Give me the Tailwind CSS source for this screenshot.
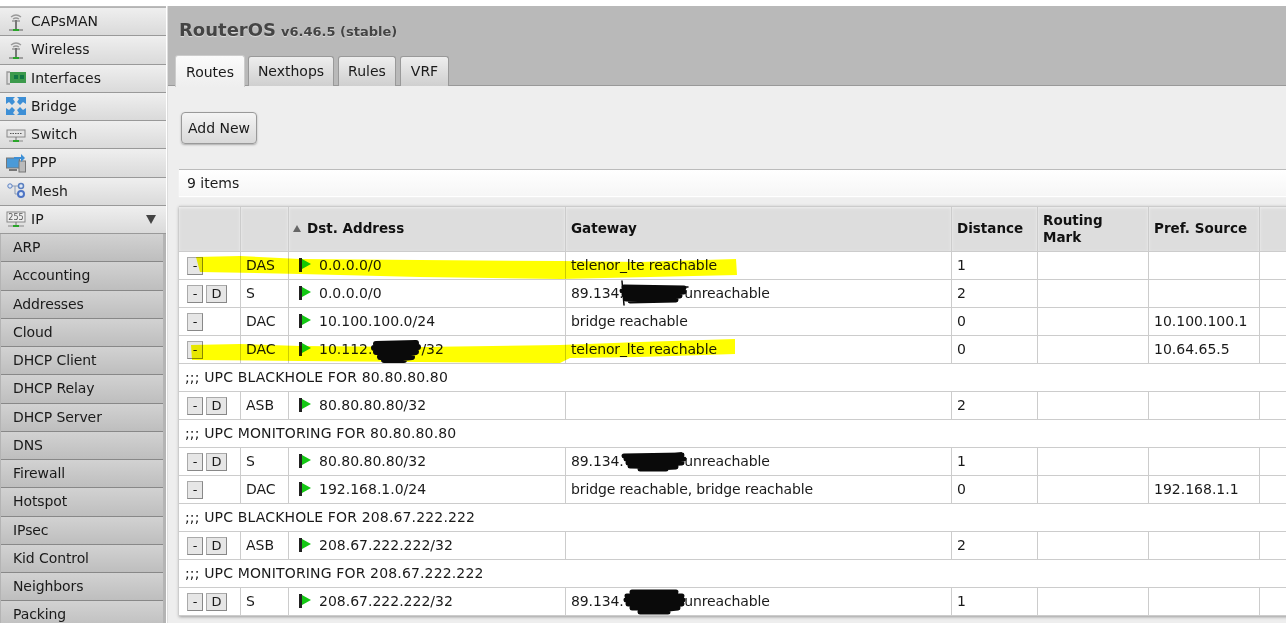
<!DOCTYPE html>
<html lang="en">
<head>
  <meta charset="UTF-8" />
  <title>RouterOS - Routes</title>
  <script src="https://cdn.jsdelivr.net/npm/@tailwindcss/browser@4"></script>
</head>
<body class="bg-white">
  <div class="relative h-[623px] w-[1286px] overflow-hidden bg-white pt-[6px] font-['DejaVu_Sans',sans-serif] text-[14px] text-[#1a1a1a]">
    <div class="flex h-[617px]">

      <!-- menu -->
      <nav id="menu" class="h-full w-[166px] shrink-0 overflow-hidden border-t border-[#bbb] bg-[#b4b4b4] pt-px"></nav>

      <main class="ml-px flex h-full min-w-0 flex-1 flex-col border-l border-[#ddd] bg-[#eeeeee]">
        <header class="h-[80px] shrink-0 border-b border-[#999] bg-[#b9b9b9]">
          <div class="flex h-[48px] items-baseline pl-[11px] pt-[10px] font-bold text-[#444] [text-shadow:0_1px_1px_#ddd]">
            <span class="text-[18px]">RouterOS</span>
            <span class="ml-[5px] text-[13px]">v6.46.5 (stable)</span>
          </div>
          <div class="flex h-[32px] items-end gap-[3px] pl-[7px] text-[14px]">
            <div class="mb-[-1px] flex h-[32px] w-[70px] items-center justify-center rounded-t-[3px] border border-b-0 border-[#ccc] bg-gradient-to-b from-[#fbfbfb] to-[#eeeeee] pt-[2px]">Routes</div>
            <div class="flex h-[30px] w-[86px] items-center justify-center rounded-t-[3px] border border-b-0 border-[#999] bg-gradient-to-b from-[#eee] to-[#cfcfcf]">Nexthops</div>
            <div class="ml-px flex h-[30px] w-[58px] items-center justify-center rounded-t-[3px] border border-b-0 border-[#999] bg-gradient-to-b from-[#eee] to-[#cfcfcf]">Rules</div>
            <div class="ml-px flex h-[30px] w-[49px] items-center justify-center rounded-t-[3px] border border-b-0 border-[#999] bg-gradient-to-b from-[#eee] to-[#cfcfcf]">VRF</div>
          </div>
        </header>

        <div class="pl-[11px]">
          <button class="mt-[26px] ml-[2px] block h-[32px] w-[76px] rounded-[4px] border border-[#999] bg-gradient-to-b from-[#f4f4f4] to-[#d9d9d9] text-[14px] shadow-[0_1px_2px_#aaa]">Add New</button>
          <div class="mt-[25px] flex h-[27px] items-center border-t border-[#bbb] bg-gradient-to-b from-[#ffffff] to-[#f6f6f6] pl-[8px] text-[14px] shadow-[0_1px_1px_#fff]">9 items</div>

          <table class="mt-[10px] w-[1141px] table-fixed border-separate border-spacing-0 bg-white shadow-[0_1px_3px_#999]">
            <colgroup>
              <col class="w-[62px]" /><col class="w-[48px]" /><col class="w-[277px]" /><col class="w-[386px]" />
              <col class="w-[86px]" /><col class="w-[111px]" /><col class="w-[111px]" /><col class="w-[60px]" />
            </colgroup>
            <thead>
              <tr class="h-[46px] text-left text-[13.5px] font-bold leading-[17px] text-[#111]">
                <th class="border-y border-r border-[#ccc] bg-[#dddddd] shadow-[inset_0_1px_3px_#f0f0f0]"></th>
                <th class="border-y border-r border-[#ccc] bg-[#dddddd] shadow-[inset_0_1px_3px_#f0f0f0]"></th>
                <th class="border-y border-r border-[#ccc] bg-[#dddddd] pb-[2px] pl-[4px] shadow-[inset_0_1px_3px_#f0f0f0]"><span class="mr-[6px] inline-block h-0 w-0 border-x-[4px] border-b-[7px] border-x-transparent border-b-[#666] align-[1px]"></span>Dst. Address</th>
                <th class="border-y border-r border-[#ccc] bg-[#dddddd] pb-[2px] pl-[5px] shadow-[inset_0_1px_3px_#f0f0f0]">Gateway</th>
                <th class="border-y border-r border-[#ccc] bg-[#dddddd] pb-[2px] pl-[5px] shadow-[inset_0_1px_3px_#f0f0f0]">Distance</th>
                <th class="border-y border-r border-[#ccc] bg-[#dddddd] pl-[5px] shadow-[inset_0_1px_3px_#f0f0f0]">Routing<br />Mark</th>
                <th class="border-y border-r border-[#ccc] bg-[#dddddd] pb-[2px] pl-[5px] shadow-[inset_0_1px_3px_#f0f0f0]">Pref. Source</th>
                <th class="border-y border-[#ccc] bg-[#dddddd] shadow-[inset_0_1px_3px_#f0f0f0]"></th>
              </tr>
            </thead>
            <tbody id="routes"></tbody>
          </table>
        </div>
      </main>
    </div>

    <!-- marker and pen scribbles drawn over the screenshot -->
    <svg class="pointer-events-none absolute left-0 top-0 mix-blend-multiply" width="1286" height="623" viewBox="0 0 1286 623">
      <path fill="#ffff00" d="M196 257 L240 256 L300 259 L420 260 L560 261 L640 262 L736 259 L737 275 L650 277 L560 279 L420 277 L300 274 L200 272 Z" />
      <path fill="#ffff00" d="M191 345 L240 344 L300 346 L420 347 L560 345 L640 342 L735 339 L735 354 L640 357 L570 358 L560 363 L420 362 L300 361 L192 360 Z" />
    </svg>
    <svg class="pointer-events-none absolute left-0 top-0" width="1286" height="623" viewBox="0 0 1286 623" fill="none" stroke="#0a0a0a" stroke-linecap="round" stroke-linejoin="round">
      <path stroke-width="5" d="M624 287 L684 288 L622 291 L684 292 L624 295 L680 296 L626 299 L676 300 L630 301" />
      <path stroke-width="1.5" d="M622 281 L624 305 M684 287 L688 287" />
      <path stroke-width="6" d="M376 344 L416 343 L374 348 L418 347 L376 352 L416 352 L380 357 L412 357 L384 360 L404 360" />
      <path stroke-width="5" d="M624 456 L682 455 L626 459 L684 459 L628 463 L682 463 L630 466 L676 467 L640 469 L666 469" />
      <path stroke-width="5" d="M632 592 L676 592 L627 596 L682 596 L626 600 L683 600 L628 604 L682 604 L632 608 L678 608 L640 612 L668 612" />
    </svg>
  </div>

  <script>
    const post = '<path d="M10 8v9" stroke="#777" stroke-width="2"/><path d="M3 18h14" stroke="#888" stroke-width="1.5"/><path d="M7 18h6" stroke="#2aa52a" stroke-width="2"/>';
    const antenna = '<path d="M5 5q5-4 10 0M7 7q3-2 6 0" fill="none" stroke="#999" stroke-width="1.3"/><path d="M6 9h8" stroke="#999" stroke-width="1.5"/>' + post;
    const icons = {
      CAPsMAN: antenna,
      Wireless: antenna,
      Interfaces: '<path d="M4 4H1v12h3" fill="#ddd" stroke="#999" stroke-width="1.3"/><rect x="4" y="4" width="16" height="11" fill="#3c9a4c"/><rect x="8" y="7" width="4" height="4" fill="#174"/><rect x="14" y="7" width="4" height="4" fill="#174"/>',
      Bridge: '<g fill="#3d8fd6"><path d="M0 1h9l-2 2 2 3-3 3-3-3-3 2z"/><path d="M20 1h-9l2 2-2 3 3 3 3-3 3 2z"/><path d="M0 19h9l-2-2 2-3-3-3-3 3-3-2z"/><path d="M20 19h-9l2-2-2-3 3-3 3 3 3-2z"/></g>',
      Switch: '<rect x="1" y="5" width="18" height="7" fill="#e4e4e4" stroke="#888"/><path d="M4 8.5h12" stroke="#555" stroke-dasharray="1.5 1"/><path d="M10 12v4" stroke="#777"/><path d="M3 16h14" stroke="#888"/><path d="M7 16h6" stroke="#2aa52a" stroke-width="2"/>',
      PPP: '<rect x="0.5" y="5" width="13" height="10" fill="#4a9ad8" stroke="#777"/><path d="M3 17h8" stroke="#777" stroke-width="2"/><rect x="13" y="8" width="6.5" height="11" fill="#bbb" stroke="#777"/><path d="M8 4h7V1l4 4-4 4V6H8z" fill="#3d8fd6"/>',
      Mesh: '<path d="M4 5h5v8h6M9 5h6" fill="none" stroke="#8a9bb5"/><circle cx="4" cy="5" r="2.2" fill="#dfe8f5" stroke="#5a7fc0"/><circle cx="15" cy="5" r="2.5" fill="#dfe8f5" stroke="#5a7fc0" stroke-width="1.5"/><circle cx="15" cy="13" r="3" fill="#dfe8f5" stroke="#4d74c4" stroke-width="2"/>',
      IP: '<rect x="1" y="3" width="18" height="10" fill="#eee" stroke="#888"/><text x="10" y="11" text-anchor="middle" font-size="8" fill="#555" font-family="DejaVu Sans">255</text><path d="M10 13v3" stroke="#777"/><path d="M2 17h16" stroke="#888"/><path d="M7 17h6" stroke="#2aa52a" stroke-width="2"/>'
    };
    const subItems = ["ARP", "Accounting", "Addresses", "Cloud", "DHCP Client", "DHCP Relay", "DHCP Server", "DNS", "Firewall", "Hotspot", "IPsec", "Kid Control", "Neighbors", "Packing"];

    let menu = "";
    Object.keys(icons).forEach(name => {
      menu += `<div class="flex h-[28.25px] items-center border-b border-[#999] bg-gradient-to-b from-[#efefef] to-[#dadada] pl-[6px]">
        <svg class="mr-[5px] shrink-0" width="20" height="20" viewBox="0 0 20 20">${icons[name]}</svg><span class="flex-1">${name}</span>
        ${name === "IP" ? '<span class="mr-[10px] h-0 w-0 border-x-[5px] border-t-[9px] border-x-transparent border-t-[#444]"></span>' : ""}
      </div>`;
    });
    subItems.forEach(name => {
      menu += `<div class="ml-px mr-[3px] flex h-[28.25px] items-center border-b border-[#888] bg-gradient-to-b from-[#d2d2d2] to-[#bebebe] pl-[12px] tracking-[-0.1px]">${name}</div>`;
    });
    document.getElementById("menu").innerHTML = menu;

    const flag = '<svg class="mr-[8px] inline-block align-[-2px]" width="12" height="14" viewBox="0 0 12 14"><path d="M0 0h3v14H0z" fill="#222"/><path d="M3 1l9 5-9 5z" fill="#14c814"/></svg>';
    const cell = "border-b border-r border-[#ccc] pl-[5px]";
    const btn = "inline-flex h-[18px] items-center justify-center border border-[#aaa] border-b-[#888] border-r-[#888] bg-[#e6e6e6] text-[13px]";
    const gap = "&nbsp;".repeat(14);

    const rows = [
      ["DAS", "0.0.0.0/0", "telenor_lte reachable", "1", "", false],
      ["S", "0.0.0.0/0", `89.134.${gap}unreachable`, "2", "", true],
      ["DAC", "10.100.100.0/24", "bridge reachable", "0", "10.100.100.1", false],
      ["DAC", "10.112.&nbsp;&nbsp;&nbsp;&nbsp;&nbsp;&nbsp;&nbsp;&nbsp;&nbsp;&nbsp;&nbsp;/32", "telenor_lte reachable", "0", "10.64.65.5", false],
      ";;; UPC BLACKHOLE FOR 80.80.80.80",
      ["ASB", "80.80.80.80/32", "", "2", "", true],
      ";;; UPC MONITORING FOR 80.80.80.80",
      ["S", "80.80.80.80/32", `89.134.${gap}unreachable`, "1", "", true],
      ["DAC", "192.168.1.0/24", "bridge reachable, bridge reachable", "0", "192.168.1.1", false],
      ";;; UPC BLACKHOLE FOR 208.67.222.222",
      ["ASB", "208.67.222.222/32", "", "2", "", true],
      ";;; UPC MONITORING FOR 208.67.222.222",
      ["S", "208.67.222.222/32", `89.134.${gap}unreachable`, "1", "", true]
    ];

    document.getElementById("routes").innerHTML = rows.map(r => {
      if (typeof r === "string") {
        return `<tr class="h-[28px]"><td colspan="8" class="border-b border-[#ccc] pl-[6px] tracking-[0.15px]">${r}</td></tr>`;
      }
      const [flags, dst, gateway, distance, pref, hasD] = r;
      return `<tr class="h-[28px]">
        <td class="border-b border-r border-[#ccc] pl-[8px]"><div class="flex gap-[3px]"><span class="${btn} w-[16px]">-</span>${hasD ? `<span class="${btn} w-[21px]">D</span>` : ""}</div></td>
        <td class="${cell}">${flags}</td>
        <td class="border-b border-r border-[#ccc] pl-[10px] whitespace-nowrap">${flag}${dst}</td>
        <td class="${cell} whitespace-nowrap tracking-[-0.12px]">${gateway}</td>
        <td class="${cell}">${distance}</td>
        <td class="${cell}"></td>
        <td class="${cell}">${pref}</td>
        <td class="border-b border-[#ccc]"></td>
      </tr>`;
    }).join("");
  </script>
</body>
</html>
